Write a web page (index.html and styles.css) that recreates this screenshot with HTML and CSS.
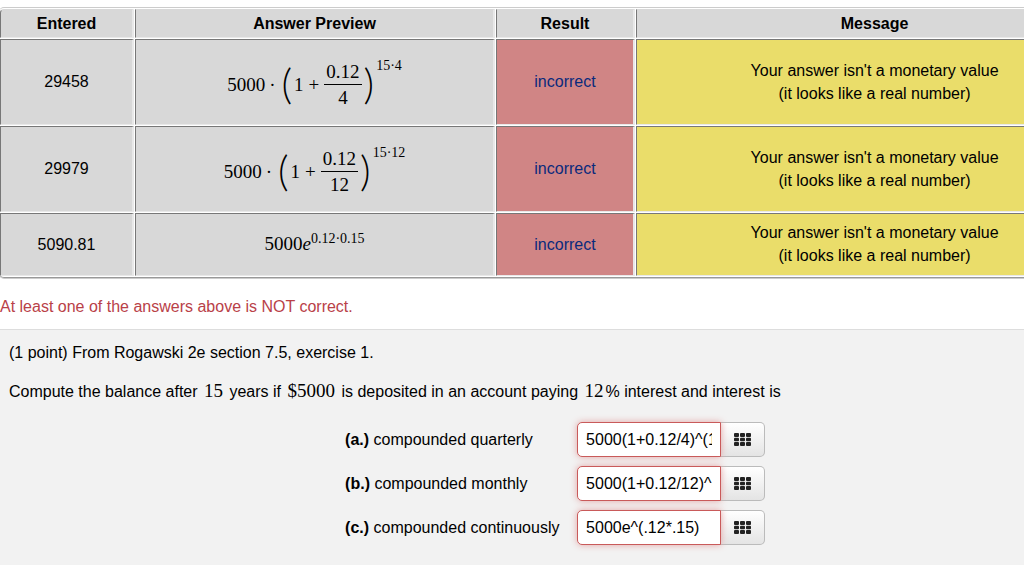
FILE: index.html
```
<!DOCTYPE html>
<html lang="en">
<head>
    <meta charset="UTF-8">
    <title>Section 7.5</title>
    <link rel="stylesheet" href="styles.css">
</head>
<body>
    <svg class="sprite" aria-hidden="true">
        <symbol id="grid" viewBox="0 0 17 13">
            <rect x="0" y="0" width="5" height="4" rx="1"/>
            <rect x="6" y="0" width="5" height="4" rx="1"/>
            <rect x="12" y="0" width="5" height="4" rx="1"/>
            <rect x="0" y="4.7" width="5" height="3.6" rx="1"/>
            <rect x="6" y="4.7" width="5" height="3.6" rx="1"/>
            <rect x="12" y="4.7" width="5" height="3.6" rx="1"/>
            <rect x="0" y="9" width="5" height="4" rx="1"/>
            <rect x="6" y="9" width="5" height="4" rx="1"/>
            <rect x="12" y="9" width="5" height="4" rx="1"/>
        </symbol>
    </svg>
    <div class="page">
        <table class="results">
            <colgroup>
                <col class="col-entered">
                <col class="col-preview">
                <col class="col-result">
                <col>
            </colgroup>
            <thead>
                <tr>
                    <th>Entered</th>
                    <th>Answer Preview</th>
                    <th>Result</th>
                    <th>Message</th>
                </tr>
            </thead>
            <tbody>
                <tr class="tall">
                    <td>29458</td>
                    <td>
                        <div class="math">
                            <span>5000</span><span class="dot">·</span><span class="paren">(</span><span>1</span><span class="plus">+</span>
                            <span class="frac"><span class="num">0.12</span><span>4</span></span>
                            <span class="paren">)</span><span class="power">15·4</span>
                        </div>
                    </td>
                    <td class="incorrect"><a href="#answer-a">incorrect</a></td>
                    <td class="message">Your answer isn't a monetary value<br>(it looks like a real number)</td>
                </tr>
                <tr class="tall">
                    <td>29979</td>
                    <td>
                        <div class="math">
                            <span>5000</span><span class="dot">·</span><span class="paren">(</span><span>1</span><span class="plus">+</span>
                            <span class="frac"><span class="num">0.12</span><span>12</span></span>
                            <span class="paren">)</span><span class="power">15·12</span>
                        </div>
                    </td>
                    <td class="incorrect"><a href="#answer-b">incorrect</a></td>
                    <td class="message">Your answer isn't a monetary value<br>(it looks like a real number)</td>
                </tr>
                <tr>
                    <td>5090.81</td>
                    <td><span class="math-inline">5000<i>e</i><sup>0.12·0.15</sup></span></td>
                    <td class="incorrect"><a href="#answer-c">incorrect</a></td>
                    <td class="message">Your answer isn't a monetary value<br>(it looks like a real number)</td>
                </tr>
            </tbody>
        </table>

        <p class="summary">At least one of the answers above is NOT correct.</p>

        <form class="problem">
            <p>(1 point) From Rogawski 2e section 7.5, exercise 1.</p>
            <p>Compute the balance after <span class="math-inline spaced">15</span> years if <span class="math-inline spaced">$5000</span> is deposited in an account paying <span class="math-inline spaced">12</span>% interest and interest is</p>
            <div class="answers">
                <label for="answer-a"><b>(a.)</b> compounded quarterly</label>
                <div class="field">
                    <input type="text" id="answer-a" value="5000(1+0.12/4)^(15*4)">
                    <button type="button" aria-label="Equation editor"><svg><use href="#grid"/></svg></button>
                </div>
                <label for="answer-b"><b>(b.)</b> compounded monthly</label>
                <div class="field">
                    <input type="text" id="answer-b" value="5000(1+0.12/12)^(15*12)">
                    <button type="button" aria-label="Equation editor"><svg><use href="#grid"/></svg></button>
                </div>
                <label for="answer-c"><b>(c.)</b> compounded continuously</label>
                <div class="field">
                    <input type="text" id="answer-c" value="5000e^(.12*.15)">
                    <button type="button" aria-label="Equation editor"><svg><use href="#grid"/></svg></button>
                </div>
            </div>
        </form>
    </div>
</body>
</html>
```
FILE: styles.css
```
* {
    box-sizing: border-box;
}

body {
    margin: 0;
    background-color: #fff;
    color: #000;
    font-family: "Liberation Sans", Arial, sans-serif;
    font-size: 16px;
    line-height: 23px;
    overflow: hidden;
}

.sprite {
    display: none;
}

/* the results table is wider than the window */
.page {
    width: 109%;
    min-height: 100vh;
    padding-top: 7px;
    display: flex;
    flex-direction: column;
}

.results {
    width: 100%;
    table-layout: fixed;
    border-collapse: separate;
    border-spacing: 1px;
    border-top: 1px solid #ccc;
    border-bottom: 1px solid #999;
    border-radius: 5px;
    box-shadow: 0 1px 0 #ccc;
    margin-left: -1px;
    text-align: center;
}

.col-entered {
    width: 134px;
}

.col-preview {
    width: 360px;
}

.col-result {
    width: 139px;
}

.results th,
.results td {
    padding: 2px;
    background-color: #d8d8d8;
    border: 1px solid #777;
    border-right: 2px solid #e8e8e8;
    border-bottom-color: #e8e8e8;
    vertical-align: middle;
}

.results th {
    height: 29px;
    border-top-color: #d8d8d8;
}

.results th:first-child {
    border-top-left-radius: 4px;
}

.results td {
    height: 63px;
    padding-bottom: 3px;
}

.results .tall td {
    height: 86px;
}

.results .incorrect {
    background-color: #d08585;
}

.incorrect a {
    color: #0a2a7c;
    text-decoration: none;
}

.results .message {
    background-color: #eadd6a;
}

.math,
.math-inline {
    font-family: "Liberation Serif", "Times New Roman", serif;
    font-size: 19px;
}

.math {
    display: flex;
    justify-content: center;
    align-items: center;
    padding-top: 6px;
}

.dot {
    margin: 0 4px;
}

.paren {
    margin: 0 2px;
    font-family: Lato, "Liberation Serif", serif;
    font-size: 41px;
    font-weight: 300;
    line-height: 42px;
    padding-bottom: 2px;
}

.plus {
    margin: 0 5px;
}

.frac {
    display: flex;
    flex-direction: column;
    line-height: 25px;
}

.num {
    padding: 0 2px;
    border-bottom: 1px solid #000;
}

.power {
    align-self: flex-start;
    font-size: 14px;
    line-height: 14px;
}

.math-inline {
    line-height: 20px;
}

.spaced {
    margin: 0 2px;
}

.math-inline sup {
    font-size: 14px;
    line-height: 14px;
}

.summary {
    margin: 17px 0 11px;
    color: #b94148;
}

.problem {
    flex: 1;
    padding: 11px 9px;
    background-color: #f2f2f2;
    border-top: 1px solid #ddd;
}

.problem p {
    margin: 0 0 16px;
}

.answers {
    display: grid;
    grid-template-columns: 220px auto;
    justify-content: center;
    align-items: center;
    gap: 9px 12px;
    padding: 3px 6px 0 0;
}

.field {
    display: flex;
}

.field input {
    position: relative;
    width: 144px;
    height: 35px;
    padding: 4px 8px;
    font: inherit;
    color: #000;
    background-color: #fff;
    border: 1px solid #c95a5a;
    border-radius: 5px 0 0 5px;
    box-shadow: 0 0 7px #e3a5a5;
}

.field button {
    width: 45px;
    height: 35px;
    margin-left: -1px;
    padding: 0;
    display: flex;
    justify-content: center;
    align-items: center;
    background-image: linear-gradient(#fff, #e4e4e4);
    border: 1px solid #bbb;
    border-left: none;
    border-radius: 0 5px 5px 0;
    cursor: pointer;
}

.field svg {
    width: 17px;
    height: 13px;
    fill: #222;
}
```
